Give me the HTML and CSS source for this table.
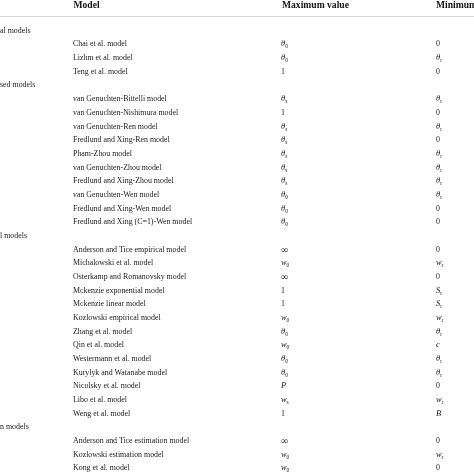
FILE: index.html
```html
<!DOCTYPE html>
<html>
<head>
<meta charset="utf-8">
<link rel="stylesheet" href="styles.css">
</head>
<body>
<div class="table">
  <div class="row head">
    <span></span><span>Model</span><span>Maximum value</span><span>Minimum value</span>
  </div>
  <div class="body">
    <div class="row cat"><span>al models</span></div>
    <div class="row"><span></span><span>Chai et al. model</span><span><i>θ</i><sub>0</sub></span><span>0</span></div>
    <div class="row"><span></span><span>Lizhm et al. model</span><span><i>θ</i><sub>0</sub></span><span><i>θ</i><sub>r</sub></span></div>
    <div class="row"><span></span><span>Teng et al. model</span><span>1</span><span>0</span></div>
    <div class="row cat"><span>sed models</span></div>
    <div class="row"><span></span><span>van Genuchten-Bittelli model</span><span><i>θ</i><sub>s</sub></span><span><i>θ</i><sub>r</sub></span></div>
    <div class="row"><span></span><span>van Genuchten-Nishimura model</span><span>1</span><span>0</span></div>
    <div class="row"><span></span><span>van Genuchten-Ren model</span><span><i>θ</i><sub>s</sub></span><span><i>θ</i><sub>r</sub></span></div>
    <div class="row"><span></span><span>Fredlund and Xing-Ren model</span><span><i>θ</i><sub>s</sub></span><span>0</span></div>
    <div class="row"><span></span><span>Pham-Zhou model</span><span><i>θ</i><sub>s</sub></span><span><i>θ</i><sub>r</sub></span></div>
    <div class="row"><span></span><span>van Genuchten-Zhou model</span><span><i>θ</i><sub>s</sub></span><span><i>θ</i><sub>r</sub></span></div>
    <div class="row"><span></span><span>Fredlund and Xing-Zhou model</span><span><i>θ</i><sub>s</sub></span><span><i>θ</i><sub>r</sub></span></div>
    <div class="row"><span></span><span>van Genuchten-Wen model</span><span><i>θ</i><sub>0</sub></span><span><i>θ</i><sub>r</sub></span></div>
    <div class="row"><span></span><span>Fredlund and Xing-Wen model</span><span><i>θ</i><sub>0</sub></span><span>0</span></div>
    <div class="row"><span></span><span>Fredlund and Xing (C=1)-Wen model</span><span><i>θ</i><sub>0</sub></span><span>0</span></div>
    <div class="row cat"><span>l models</span></div>
    <div class="row"><span></span><span>Anderson and Tice empirical model</span><span class="inf">∞</span><span>0</span></div>
    <div class="row"><span></span><span>Michalowski et al. model</span><span><i>w</i><sub>0</sub></span><span><i>w</i><sub>r</sub></span></div>
    <div class="row"><span></span><span>Osterkamp and Romanovsky model</span><span class="inf">∞</span><span>0</span></div>
    <div class="row"><span></span><span>Mckenzie exponential model</span><span>1</span><span><i>S</i><sub>r</sub></span></div>
    <div class="row"><span></span><span>Mckenzie linear model</span><span>1</span><span><i>S</i><sub>r</sub></span></div>
    <div class="row"><span></span><span>Kozlowski empirical model</span><span><i>w</i><sub>0</sub></span><span><i>w</i><sub>r</sub></span></div>
    <div class="row"><span></span><span>Zhang et al. model</span><span><i>θ</i><sub>0</sub></span><span><i>θ</i><sub>r</sub></span></div>
    <div class="row"><span></span><span>Qin et al. model</span><span><i>w</i><sub>0</sub></span><span><i>c</i></span></div>
    <div class="row"><span></span><span>Westermann et al. model</span><span><i>θ</i><sub>0</sub></span><span><i>θ</i><sub>r</sub></span></div>
    <div class="row"><span></span><span>Kurylyk and Watanabe model</span><span><i>θ</i><sub>0</sub></span><span><i>θ</i><sub>r</sub></span></div>
    <div class="row"><span></span><span>Nicolsky et al. model</span><span><i>P</i></span><span>0</span></div>
    <div class="row"><span></span><span>Libo et al. model</span><span><i>w</i><sub>s</sub></span><span><i>w</i><sub>r</sub></span></div>
    <div class="row"><span></span><span>Weng et al. model</span><span>1</span><span><i>B</i></span></div>
    <div class="row cat"><span>n models</span></div>
    <div class="row"><span></span><span>Anderson and Tice estimation model</span><span class="inf">∞</span><span>0</span></div>
    <div class="row"><span></span><span>Kozlowski estimation model</span><span><i>w</i><sub>0</sub></span><span><i>w</i><sub>r</sub></span></div>
    <div class="row"><span></span><span>Kong et al. model</span><span><i>w</i><sub>0</sub></span><span>0</span></div>
  </div>
</div>
</body>
</html>
```

FILE: styles.css
```css
html, body {
  margin: 0;
  padding: 0;
  background: #ffffff;
}
body {
  font-family: "Liberation Serif", "DejaVu Serif", serif;
  color: #1a1a1a;
  overflow: hidden;
  width: 474px;
  height: 474px;
}
.table {
  width: 474px;
  overflow: hidden;
  will-change: transform;
}
.row {
  display: grid;
  grid-template-columns: 73px 208px 155px 38px;
  white-space: nowrap;
}
.head {
  height: 17px;
  box-sizing: border-box;
  border-bottom: 1px solid #d8d8d8;
  font-weight: bold;
  font-size: 9.6px;
  line-height: 10.5px;
  color: #141414;
}
.head span:nth-child(2) {
  padding-left: 0.5px;
}
.head span:nth-child(3) {
  padding-left: 1px;
}
.body {
  padding-top: 6.8px;
  font-size: 7.9px;
  line-height: 13.68px;
}
.row.cat {
  display: block;
  height: 13.68px;
}
.row span {
  display: block;
  height: 13.68px;
  overflow: hidden;
}
i {
  font-style: italic;
  font-size: 8.4px;
}
sub {
  font-size: 5.5px;
  line-height: 0;
  vertical-align: -1.5px;
}
.inf {
  font-size: 10px;
  line-height: 13.68px;
}
```
